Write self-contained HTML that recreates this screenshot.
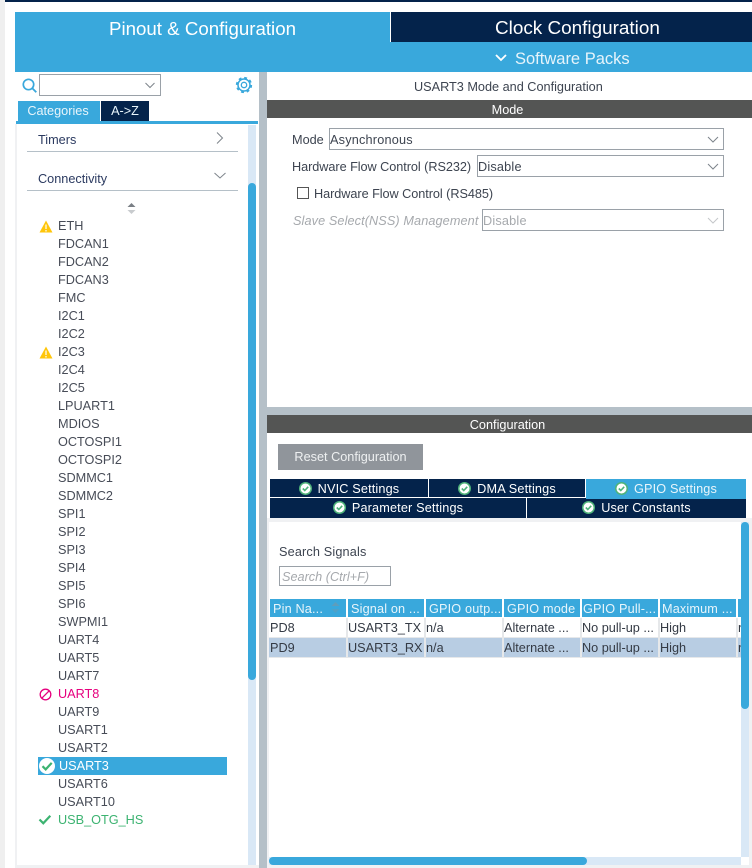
<!DOCTYPE html>
<html><head><meta charset="utf-8">
<style>
html,body{margin:0;padding:0;background:#fff;}
body{width:752px;height:868px;overflow:hidden;position:relative;font-family:"Liberation Sans",sans-serif;font-size:12.7px;color:#3d4450;}
.a{position:absolute;}
.t{position:absolute;white-space:nowrap;line-height:18px;height:18px;margin-top:1px;}
.sel{position:absolute;box-sizing:border-box;border:1px solid #9aa1a8;background:#fff;}
.sel span{position:absolute;left:0;top:2px;line-height:18px;letter-spacing:.2px;}
.sel svg{position:absolute;right:3px;top:5px;}
.li{position:absolute;left:58px;line-height:18px;height:18px;white-space:nowrap;color:#474c57;}
.tab{position:absolute;background:#04234b;color:#fff;text-align:center;line-height:20px;letter-spacing:.15px;box-sizing:border-box;}
.tab svg{vertical-align:-2px;margin-right:6px;}
.th{position:absolute;top:599px;height:18px;line-height:20px;background:#39a8dc;color:#e8f5fb;white-space:nowrap;overflow:hidden;padding-left:3px;box-sizing:border-box;letter-spacing:.15px;}
.td{position:absolute;height:19px;line-height:20px;white-space:nowrap;overflow:hidden;padding-left:1px;box-sizing:border-box;color:#343a44;}
.bar{position:absolute;left:267px;width:481px;height:18px;color:#fff;text-align:center;line-height:20px;}
.bg{position:absolute;left:267px;width:485px;height:18px;background:#545554;}
</style></head><body>
<div class="a" style="left:0;top:0;width:5px;height:868px;background:#efefef"></div>
<div class="a" style="left:5px;top:0;width:747px;height:2px;background:#04234b"></div>

<div class="a" style="left:15px;top:12px;width:737px;height:60px;background:#39a8dc"></div>
<div class="a" style="left:391px;top:12px;width:361px;height:30px;background:#04234b"></div>
<div class="a" style="left:390px;top:12px;width:1px;height:30px;background:#fff"></div>
<div class="t" style="left:109px;top:17px;height:24px;line-height:24px;font-size:18.7px;color:#fff;margin:0">Pinout &amp; Configuration</div>
<div class="t" style="left:495px;top:17px;height:24px;line-height:24px;font-size:18.9px;color:#fff;margin:0">Clock Configuration</div>
<svg class="a" style="left:494px;top:52px" width="14" height="12"><path d="M2 3l5 5 5-5" fill="none" stroke="#fff" stroke-width="1.8"/></svg>
<div class="t" style="left:515px;top:48px;height:22px;line-height:22px;font-size:16.5px;color:#e6f4fb;margin:0">Software Packs</div>

<!-- left panel -->
<div class="a" style="left:15px;top:72px;width:244px;height:796px;background:#fff"></div>
<div class="a" style="left:15px;top:124px;width:2px;height:744px;background:#f0f1f3"></div>
<div class="a" style="left:15px;top:865px;width:244px;height:3px;background:#f0f1f3"></div>
<svg class="a" style="left:21px;top:77px" width="17" height="17"><circle cx="7.5" cy="7.5" r="5.2" fill="none" stroke="#39a8dc" stroke-width="1.7"/><path d="M11.3 11.3l4 4" stroke="#39a8dc" stroke-width="1.8"/></svg>
<div class="sel" style="left:39px;top:74px;width:122px;height:22px"><svg width="14" height="10" style="right:3px;top:6px"><path d="M2.5 2l4.500 4.500 4.500-4.500" fill="none" stroke="#7d848b" stroke-width="1"/></svg></div>
<svg class="a" style="left:235px;top:76px" width="18" height="18" viewBox="0 0 18 18"><circle cx="9" cy="9" r="2.700" fill="none" stroke="#39a8dc" stroke-width="1.300"/><circle cx="9" cy="9" r="6" fill="none" stroke="#39a8dc" stroke-width="1.500"/><circle cx="9" cy="9" r="7.300" fill="none" stroke="#39a8dc" stroke-width="1.700" stroke-dasharray="2.900 2.830"/></svg>
<div class="a" style="left:18px;top:101px;width:80px;height:20px;padding-right:2px;background:#39a8dc;color:#e8f5fb;text-align:center;line-height:20px">Categories</div>
<div class="a" style="left:101px;top:101px;width:48px;height:20px;background:#04234b;color:#e8f5fb;text-align:center;line-height:20px">A-&gt;Z</div>
<div class="a" style="left:16px;top:121px;width:242px;height:3px;background:#39a8dc"></div>
<div class="a" style="left:248px;top:125px;width:8px;height:740px;background:#d9e8f6"></div>
<div class="a" style="left:248px;top:183px;width:8px;height:497px;background:#39a8dc;border-radius:4px"></div>

<div class="t" style="left:38px;top:130px;color:#2b3a60">Timers</div>
<svg class="a" style="left:215px;top:131px" width="10" height="14"><path d="M2 1.500l5.500 5.500-5.500 5.500" fill="none" stroke="#7d848b" stroke-width="1"/></svg>
<div class="a" style="left:27px;top:151px;width:211px;height:1px;background:#b5c0c8"></div>
<div class="t" style="left:38px;top:169px;color:#2b3a60">Connectivity</div>
<svg class="a" style="left:213px;top:171px" width="14" height="10"><path d="M1.500 2l5.500 5 5.500-5" fill="none" stroke="#7d848b" stroke-width="1"/></svg>
<div class="a" style="left:27px;top:190px;width:211px;height:1px;background:#b5c0c8"></div>
<svg class="a" style="left:126px;top:202px" width="11" height="13"><path d="M5.500 1l4 4h-8z" fill="#7a7f85"/><path d="M5.500 12l4-4h-8z" fill="#c8cbce"/></svg>

<svg class="a" style="left:39px;top:220px" width="14" height="13"><path d="M7 .5l6.500 12h-13z" fill="#ffc60a"/><path d="M7 4.500v4.500M7 10v1.500" stroke="#fff" stroke-width="1.200"/></svg>
<div class="li" style="top:217px">ETH</div>
<div class="li" style="top:235px">FDCAN1</div>
<div class="li" style="top:253px">FDCAN2</div>
<div class="li" style="top:271px">FDCAN3</div>
<div class="li" style="top:289px">FMC</div>
<div class="li" style="top:307px">I2C1</div>
<div class="li" style="top:325px">I2C2</div>
<svg class="a" style="left:39px;top:346px" width="14" height="13"><path d="M7 .5l6.500 12h-13z" fill="#ffc60a"/><path d="M7 4.500v4.500M7 10v1.500" stroke="#fff" stroke-width="1.200"/></svg>
<div class="li" style="top:343px">I2C3</div>
<div class="li" style="top:361px">I2C4</div>
<div class="li" style="top:379px">I2C5</div>
<div class="li" style="top:397px">LPUART1</div>
<div class="li" style="top:415px">MDIOS</div>
<div class="li" style="top:433px">OCTOSPI1</div>
<div class="li" style="top:451px">OCTOSPI2</div>
<div class="li" style="top:469px">SDMMC1</div>
<div class="li" style="top:487px">SDMMC2</div>
<div class="li" style="top:505px">SPI1</div>
<div class="li" style="top:523px">SPI2</div>
<div class="li" style="top:541px">SPI3</div>
<div class="li" style="top:559px">SPI4</div>
<div class="li" style="top:577px">SPI5</div>
<div class="li" style="top:595px">SPI6</div>
<div class="li" style="top:613px">SWPMI1</div>
<div class="li" style="top:631px">UART4</div>
<div class="li" style="top:649px">UART5</div>
<div class="li" style="top:667px">UART7</div>
<svg class="a" style="left:39px;top:688px" width="13" height="13"><circle cx="6.500" cy="6.500" r="5.300" fill="none" stroke="#e6007e" stroke-width="1.300"/><path d="M2.800 10.200l7.400-7.400" stroke="#e6007e" stroke-width="1.300"/></svg>
<div class="li" style="top:685px;color:#e6007e">UART8</div>
<div class="li" style="top:703px">UART9</div>
<div class="li" style="top:721px">USART1</div>
<div class="li" style="top:739px">USART2</div>
<div class="a" style="left:38px;top:757px;width:189px;height:18px;background:#39a8dc"></div>
<svg class="a" style="left:38px;top:757px" width="18" height="18"><circle cx="9" cy="9" r="8" fill="#fff"/><path d="M4.500 9.200l3.200 3.200 6-6.500" fill="none" stroke="#3cb371" stroke-width="2.200"/></svg>
<div class="li" style="top:757px;left:59px;color:#fff">USART3</div>
<div class="li" style="top:775px">USART6</div>
<div class="li" style="top:793px">USART10</div>
<svg class="a" style="left:38px;top:813px" width="14" height="13"><path d="M1.500 6.500l3.800 3.800 7-7.500" fill="none" stroke="#3cb371" stroke-width="2.200"/></svg>
<div class="li" style="top:811px;color:#3cb371">USB_OTG_HS</div>

<!-- splitters -->
<div class="a" style="left:259px;top:72px;width:8px;height:796px;background:#b5c0c8"></div>
<div class="a" style="left:267px;top:407px;width:485px;height:8px;background:#b5c0c8"></div>

<!-- mode -->
<div class="t" style="left:414px;top:77px;color:#3d4450">USART3 Mode and Configuration</div>
<div class="bg" style="top:100px"></div>
<div class="bar" style="top:100px">Mode</div>
<div class="t" style="left:292px;top:130px">Mode</div>
<div class="sel" style="left:329px;top:128px;width:395px;height:22px"><span>Asynchronous</span><svg width="14" height="10" style="right:3px;top:6px"><path d="M2 2l5 5 5-5" fill="none" stroke="#7d848b" stroke-width="1"/></svg></div>
<div class="t" style="left:292px;top:157px;letter-spacing:-.05px">Hardware Flow Control (RS232)</div>
<div class="sel" style="left:477px;top:155px;width:247px;height:22px"><span>Disable</span><svg width="14" height="10" style="right:3px;top:6px"><path d="M2 2l5 5 5-5" fill="none" stroke="#7d848b" stroke-width="1"/></svg></div>
<div class="a" style="left:297px;top:187px;width:12px;height:12px;border:1px solid #555;box-sizing:border-box"></div>
<div class="t" style="left:314px;top:184px;letter-spacing:-.05px">Hardware Flow Control (RS485)</div>
<div class="t" style="left:293px;top:211px;font-style:italic;color:#a6a9ad;letter-spacing:.1px">Slave Select(NSS) Management</div>
<div class="sel" style="left:482px;top:209px;width:242px;height:22px"><span style="color:#a6a9ad">Disable</span><svg width="14" height="10" style="right:3px;top:6px"><path d="M2 2l5 5 5-5" fill="none" stroke="#c4c7ca" stroke-width="1"/></svg></div>

<!-- configuration -->
<div class="bg" style="top:415px"></div>
<div class="bar" style="top:415px">Configuration</div>
<div class="a" style="left:278px;top:444px;width:145px;height:26px;background:#90959b;color:#eef0f1;text-align:center;line-height:27px">Reset Configuration</div>

<div class="a" style="left:270px;top:497px;width:316px;height:1px;background:#fff"></div>
<div class="tab" style="left:270px;top:479px;width:158px;height:18px"><svg width="13" height="13"><circle cx="6.500" cy="6.500" r="6.500" fill="#4fb37a"/><circle cx="6.500" cy="6.500" r="5" fill="#fff"/><path d="M3.800 6.500l2 2 3.400-3.700" fill="none" stroke="#4fb37a" stroke-width="1.600"/></svg>NVIC Settings</div>
<div class="tab" style="left:429px;top:479px;width:156px;height:18px"><svg width="13" height="13"><circle cx="6.500" cy="6.500" r="6.500" fill="#4fb37a"/><circle cx="6.500" cy="6.500" r="5" fill="#fff"/><path d="M3.800 6.500l2 2 3.400-3.700" fill="none" stroke="#4fb37a" stroke-width="1.600"/></svg>DMA Settings</div>
<div class="tab" style="left:270px;top:498px;width:256px;height:20px"><svg width="13" height="13"><circle cx="6.500" cy="6.500" r="6.500" fill="#4fb37a"/><circle cx="6.500" cy="6.500" r="5" fill="#fff"/><path d="M3.800 6.500l2 2 3.400-3.700" fill="none" stroke="#4fb37a" stroke-width="1.600"/></svg>Parameter Settings</div>
<div class="tab" style="left:527px;top:498px;width:219px;height:20px"><svg width="13" height="13"><circle cx="6.500" cy="6.500" r="6.500" fill="#4fb37a"/><circle cx="6.500" cy="6.500" r="5" fill="#fff"/><path d="M3.800 6.500l2 2 3.400-3.700" fill="none" stroke="#4fb37a" stroke-width="1.600"/></svg>User Constants</div>
<div class="tab" style="left:586px;top:479px;width:160px;height:20px;background:#39a8dc;color:#e8f5fb"><svg width="13" height="13"><circle cx="6.500" cy="6.500" r="6.500" fill="#4fb37a"/><circle cx="6.500" cy="6.500" r="5" fill="#fff"/><path d="M3.800 6.500l2 2 3.400-3.700" fill="none" stroke="#4fb37a" stroke-width="1.600"/></svg>GPIO Settings</div>
<div class="a" style="left:267px;top:518px;width:485px;height:4px;background:#f0f1f3"></div>
<div class="a" style="left:267px;top:518px;width:2px;height:350px;background:#f0f1f3"></div>

<div class="t" style="left:279px;top:542px;letter-spacing:.15px">Search Signals</div>
<div class="a" style="left:279px;top:566px;width:112px;height:20px;border:1px solid #9aa1a8;box-sizing:border-box;font-style:italic;color:#a6a9ad;line-height:20px;padding-left:2px">Search (Ctrl+F)</div>

<div class="th" style="left:270px;width:76px">Pin Na...</div>
<svg class="a" style="left:330px;top:601px" width="11" height="13"><path d="M5.500 1l4 4h-8z" fill="#5f9dbb"/><path d="M5.500 12l4-4h-8z" fill="#5f9dbb" opacity=".6"/></svg>
<div class="th" style="left:348px;width:76px">Signal on ...</div>
<div class="th" style="left:426px;width:76px">GPIO outp...</div>
<div class="th" style="left:504px;width:76px">GPIO mode</div>
<div class="th" style="left:582px;width:76px;padding-left:1px">GPIO Pull-...</div>
<div class="th" style="left:660px;width:76px;padding-left:2px">Maximum ...</div>
<div class="th" style="left:738px;width:3px"></div>

<div class="a" style="left:269px;top:638px;width:472px;height:19px;background:#b8cde3"></div>
<div class="a" style="left:269px;top:637px;width:472px;height:1px;background:#e6e8ea"></div>
<div class="a" style="left:269px;top:657px;width:472px;height:1px;background:#e6e8ea"></div>
<div class="a" style="left:346px;top:618px;width:2px;height:39px;background:#e6e8ea"></div>
<div class="a" style="left:424px;top:618px;width:2px;height:39px;background:#e6e8ea"></div>
<div class="a" style="left:502px;top:618px;width:2px;height:39px;background:#e6e8ea"></div>
<div class="a" style="left:580px;top:618px;width:2px;height:39px;background:#e6e8ea"></div>
<div class="a" style="left:658px;top:618px;width:2px;height:39px;background:#e6e8ea"></div>
<div class="a" style="left:736px;top:618px;width:2px;height:39px;background:#e6e8ea"></div>

<div class="td" style="left:269px;top:618px;width:77px">PD8</div>
<div class="td" style="left:347px;top:618px;width:77px">USART3_TX</div>
<div class="td" style="left:425px;top:618px;width:77px">n/a</div>
<div class="td" style="left:503px;top:618px;width:77px">Alternate ...</div>
<div class="td" style="left:581px;top:618px;width:77px">No pull-up ...</div>
<div class="td" style="left:659px;top:618px;width:77px">High</div>
<div class="td" style="left:737px;top:618px;width:4px">n</div>
<div class="td" style="left:269px;top:638px;width:77px">PD9</div>
<div class="td" style="left:347px;top:638px;width:77px">USART3_RX</div>
<div class="td" style="left:425px;top:638px;width:77px">n/a</div>
<div class="td" style="left:503px;top:638px;width:77px">Alternate ...</div>
<div class="td" style="left:581px;top:638px;width:77px">No pull-up ...</div>
<div class="td" style="left:659px;top:638px;width:77px">High</div>
<div class="td" style="left:737px;top:638px;width:4px">n</div>

<div class="a" style="left:741px;top:522px;width:8px;height:335px;background:#d9e8f6"></div>
<div class="a" style="left:741px;top:522px;width:8px;height:187px;background:#39a8dc;border-radius:4px"></div>
<div class="a" style="left:269px;top:857px;width:472px;height:8px;background:#d9e8f6"></div>
<div class="a" style="left:269px;top:857px;width:318px;height:8px;background:#39a8dc;border-radius:4px"></div>
<div class="a" style="left:267px;top:865px;width:485px;height:3px;background:#f0f1f3"></div>
<div class="a" style="left:749px;top:522px;width:3px;height:346px;background:#f0f1f3"></div>
</body></html>
